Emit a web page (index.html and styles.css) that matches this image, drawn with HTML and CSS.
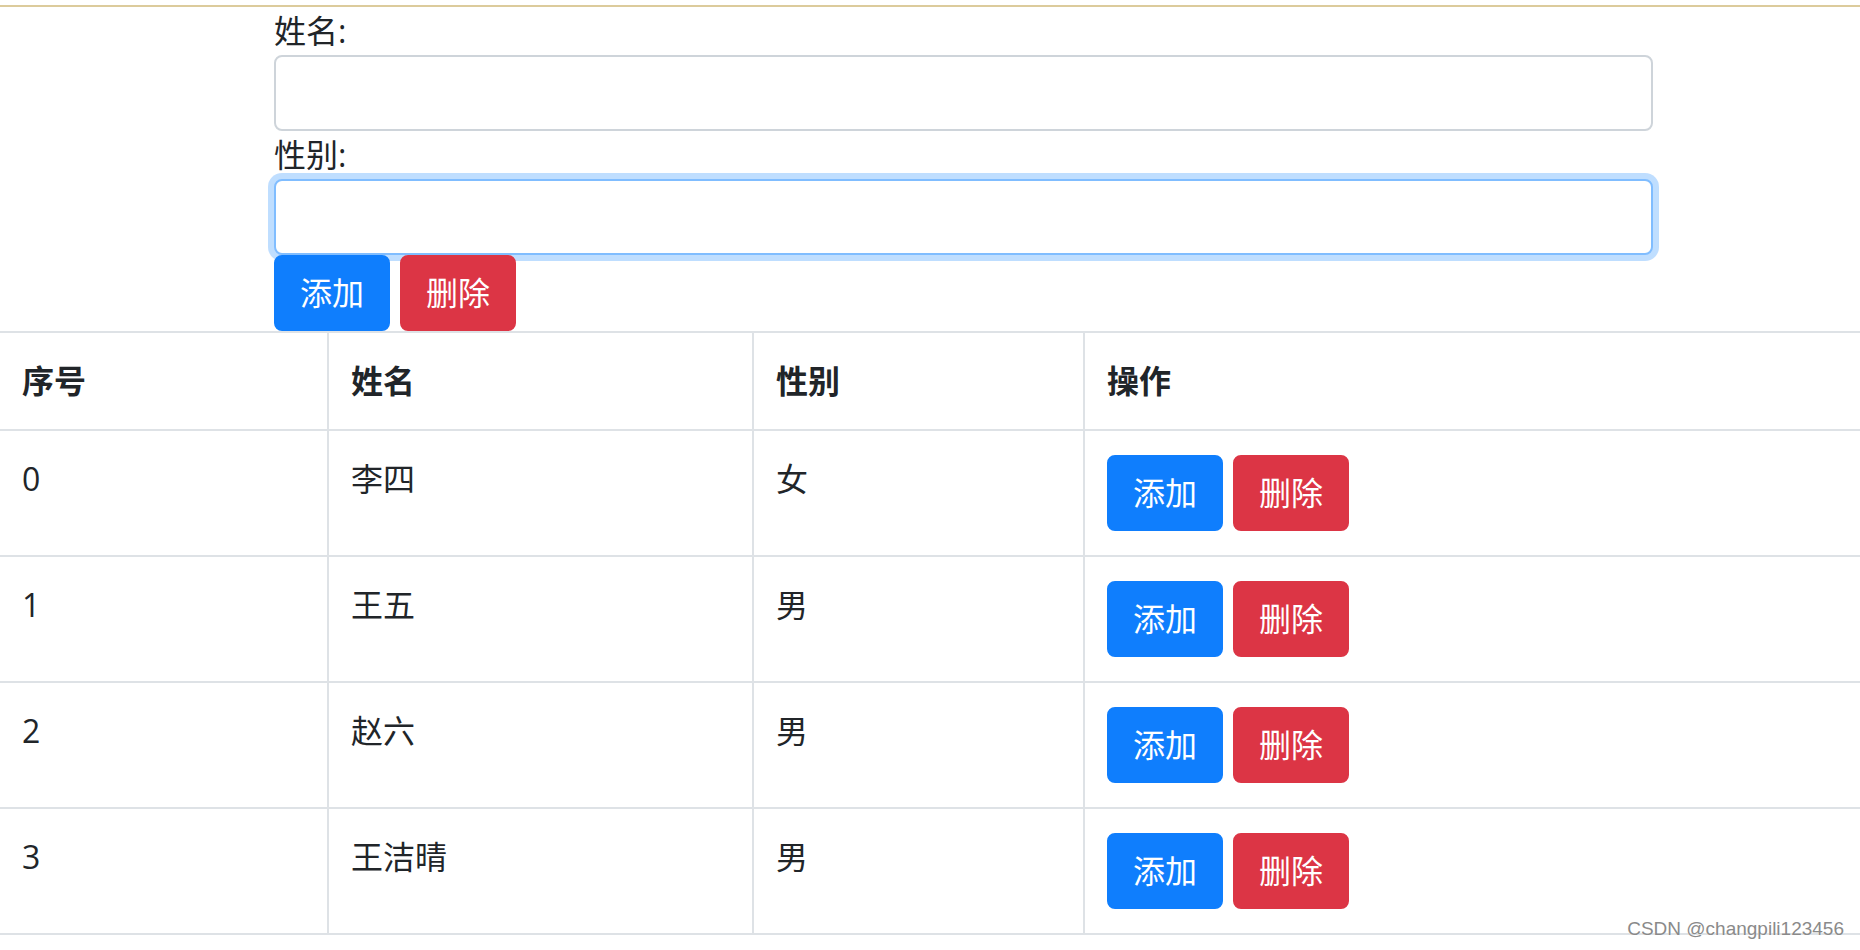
FILE: index.html
```html
<!DOCTYPE html>
<html lang="zh-CN">
<head>
    <meta charset="UTF-8">
    <meta name="viewport" content="width=device-width, initial-scale=1.0">
    <title>学生列表</title>
    <link rel="stylesheet" href="styles.css">
</head>
<body>
    <div class="top-line"></div>

    <div class="form-box">
        <label class="form-label" for="name">姓名:</label>
        <input class="form-control" id="name" type="text">
        <label class="form-label" for="sex">性别:</label>
        <input class="form-control is-focus" id="sex" type="text">
        <div class="btn-row">
            <button class="btn btn-primary">添加</button>
            <button class="btn btn-danger">删除</button>
        </div>
    </div>

    <table class="table">
        <colgroup>
            <col class="col-id">
            <col class="col-name">
            <col class="col-sex">
            <col>
        </colgroup>
        <thead>
            <tr>
                <th>序号</th>
                <th>姓名</th>
                <th>性别</th>
                <th>操作</th>
            </tr>
        </thead>
        <tbody>
            <tr>
                <td>0</td>
                <td>李四</td>
                <td>女</td>
                <td>
                    <div class="btn-row">
                        <button class="btn btn-primary">添加</button>
                        <button class="btn btn-danger">删除</button>
                    </div>
                </td>
            </tr>
            <tr>
                <td>1</td>
                <td>王五</td>
                <td>男</td>
                <td>
                    <div class="btn-row">
                        <button class="btn btn-primary">添加</button>
                        <button class="btn btn-danger">删除</button>
                    </div>
                </td>
            </tr>
            <tr>
                <td>2</td>
                <td>赵六</td>
                <td>男</td>
                <td>
                    <div class="btn-row">
                        <button class="btn btn-primary">添加</button>
                        <button class="btn btn-danger">删除</button>
                    </div>
                </td>
            </tr>
            <tr>
                <td>3</td>
                <td>王洁晴</td>
                <td>男</td>
                <td>
                    <div class="btn-row">
                        <button class="btn btn-primary">添加</button>
                        <button class="btn btn-danger">删除</button>
                    </div>
                </td>
            </tr>
        </tbody>
    </table>

    <div class="watermark">CSDN @changpili123456</div>
</body>
</html>
```

FILE: styles.css
```css
body {
    margin: 0;
    background: #fff;
    color: #212529;
    font-family: "Open Sans", "Noto Sans CJK SC", sans-serif;
    font-size: 32px;
    line-height: 48px;
    overflow: hidden;
    height: 950px;
    position: relative;
}

.top-line {
    height: 5px;
    border-bottom: 2px solid #dccb9c;
}

.form-box {
    width: 1379px;
    margin-left: 274px;
}

.form-label {
    display: block;
    height: 48px;
}

.form-control {
    display: block;
    width: 100%;
    height: 76px;
    box-sizing: border-box;
    padding: 12px 24px;
    font-size: 32px;
    font-family: inherit;
    border: 2px solid #ced4da;
    border-radius: 8px;
    background: #fff;
    outline: none;
}

.form-control.is-focus {
    border-color: #80bdff;
    box-shadow: 0 0 0 6px rgba(0, 123, 255, 0.25);
}

.btn-row {
    display: flex;
    gap: 10px;
}

.btn {
    height: 76px;
    padding: 0 24px;
    font-family: inherit;
    font-size: 32px;
    line-height: 48px;
    color: #fff;
    border: 2px solid transparent;
    border-radius: 8px;
    cursor: pointer;
}

.btn-primary {
    background: #0f7efd;
    border-color: #0f7efd;
}

.btn-danger {
    background: #dc3545;
    border-color: #dc3545;
}

.table {
    width: 100%;
    border-collapse: collapse;
    table-layout: fixed;
}

.col-id { width: 328px; }
.col-name { width: 425px; }
.col-sex { width: 331px; }

.table th,
.table td {
    border: 2px solid #dee2e6;
    padding: 24px 22px;
    text-align: left;
    vertical-align: top;
}

.table th {
    font-weight: bold;
    vertical-align: bottom;
}

.table th:first-child,
.table td:first-child {
    border-left: none;
}

.table th:last-child,
.table td:last-child {
    border-right: none;
}

.watermark {
    position: absolute;
    right: 16px;
    bottom: 11px;
    font-family: "Liberation Sans", sans-serif;
    font-size: 19px;
    line-height: 20px;
    color: #8a8a8a;
    text-shadow: 0 0 1px #fff;
}
```
